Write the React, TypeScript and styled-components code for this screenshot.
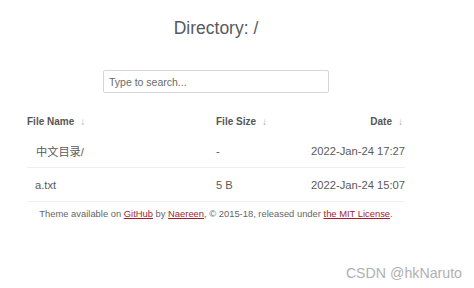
import React from "react";
import styled, { createGlobalStyle } from "styled-components";

const Global = createGlobalStyle`
  html, body { margin: 0; padding: 0; background: #fff; }
  body { font-family: "Liberation Sans", Arial, sans-serif; width: 474px; height: 288px; overflow: hidden; }
`;

const Page = styled.div`
  position: relative;
  width: 474px;
  height: 288px;
  padding-left: 27px;
  box-sizing: border-box;
`;

const Container = styled.div`
  width: 378px;
  display: flex;
  flex-direction: column;
  align-items: center;
`;

const Title = styled.h1`
  margin: 18px 0 0;
  font-size: 17.5px;
  font-weight: normal;
  color: #555a60;
  line-height: 20px;
`;

const Search = styled.input`
  margin-top: 32px;
  width: 226px;
  height: 23px;
  box-sizing: border-box;
  border: 1px solid #d6d6d6;
  border-radius: 2px;
  padding: 0 5px;
  font-family: "Liberation Sans", Arial, sans-serif;
  font-size: 10.5px;
  color: #555;
  outline: none;
  &::placeholder { color: #6a6a6a; }
`;

const Table = styled.div`
  margin-top: 14px;
  width: 100%;
  display: grid;
  grid-template-columns: 189px 1fr auto;
`;

const Head = styled.div<{ $right?: boolean }>`
  height: 28px;
  display: flex;
  align-items: center;
  justify-content: ${(p) => (p.$right ? "flex-end" : "flex-start")};
  padding-right: ${(p) => (p.$right ? "2px" : "0")};
  font-size: 10px;
  font-weight: bold;
  color: #555;
`;

const Arrow = styled.span`
  margin-left: 6px;
  font-weight: normal;
  font-size: 10px;
  color: #aaaaaa;
`;

const Cell = styled.div<{ $right?: boolean; $indent?: number; $line?: boolean }>`
  height: 33px;
  display: flex;
  align-items: center;
  justify-content: ${(p) => (p.$right ? "flex-end" : "flex-start")};
  padding-left: ${(p) => p.$indent ?? 0}px;
  border-bottom: ${(p) => (p.$line ? "1px solid #eeeeee" : "none")};
  box-sizing: border-box;
  font-size: 11.2px;
  color: #5a5a5a;
  font-family: "Liberation Sans", "Noto Sans CJK SC", Arial, sans-serif;
`;

const Footer = styled.div`
  width: 100%;
  border-top: 1px solid #eeeeee;
  text-align: center;
  padding-top: 6px;
  font-size: 9.4px;
  color: #666;
  white-space: nowrap;
`;

const Link = styled.a`
  color: #a51d2d;
  text-decoration: underline;
`;

const Watermark = styled.div`
  position: absolute;
  right: 12px;
  top: 265px;
  font-size: 14.2px;
  color: #b0b0b0;
`;

const rows = [
  { name: "中文目录/", size: "-", date: "2022-Jan-24 17:27", indent: 9 },
  { name: "a.txt", size: "5 B", date: "2022-Jan-24 15:07", indent: 8 },
];

export default function App() {
  return (
    <>
      <Global />
      <Page>
        <Container>
          <Title>Directory: /</Title>
          <Search placeholder="Type to search..." />
          <Table>
            <Head>File Name<Arrow>↓</Arrow></Head>
            <Head>File Size<Arrow>↓</Arrow></Head>
            <Head $right>Date<Arrow>↓</Arrow></Head>
            {rows.map((r, i) => (
              <React.Fragment key={r.name}>
                <Cell $indent={r.indent} $line={i === 0}>{r.name}</Cell>
                <Cell $line={i === 0}>{r.size}</Cell>
                <Cell $right $line={i === 0}>{r.date}</Cell>
              </React.Fragment>
            ))}
          </Table>
          <Footer>
            Theme available on <Link href="#">GitHub</Link> by <Link href="#">Naereen</Link>, © 2015-18, released under <Link href="#">the MIT License</Link>.
          </Footer>
        </Container>
        <Watermark>CSDN @hkNaruto</Watermark>
      </Page>
    </>
  );
}
